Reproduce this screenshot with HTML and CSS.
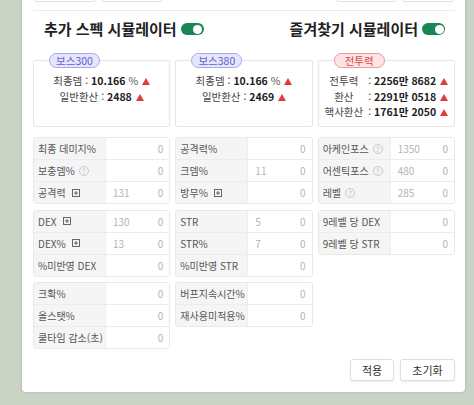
FILE: index.html
```html
<!DOCTYPE html>
<html lang="ko">
<head>
<meta charset="utf-8">
<title>추가 스펙 시뮬레이터</title>
<link rel="stylesheet" href="styles.css">
</head>
<body>
<div class="page">
  <div class="panel">
    <div class="topbar">
      <div class="tgroup tgroup-left"><span class="tbtn w62"></span><span class="tbtn w62"></span></div>
      <div class="tgroup"><span class="tbtn w61"></span><span class="tbtn w53"></span></div>
    </div>
    <div class="divider"></div>

    <div class="titles">
      <div class="title">추가 스펙 시뮬레이터<span class="toggle"><span class="knob"></span></span></div>
      <div class="title">즐겨찾기 시뮬레이터<span class="toggle"><span class="knob"></span></span></div>
    </div>

    <div class="cards">
      <div class="card">
        <div class="badge badge-blue">보스300</div>
        <div class="card-body">
          <div class="line">최종뎀 : <b>10.166</b> <span class="unit">%</span> <svg class="up" viewBox="0 0 8 7"><polygon points="4,0 8,7 0,7"/></svg></div>
          <div class="line">일반환산 : <b>2488</b> <svg class="up" viewBox="0 0 8 7"><polygon points="4,0 8,7 0,7"/></svg></div>
        </div>
      </div>
      <div class="card">
        <div class="badge badge-blue">보스380</div>
        <div class="card-body">
          <div class="line">최종뎀 : <b>10.166</b> <span class="unit">%</span> <svg class="up" viewBox="0 0 8 7"><polygon points="4,0 8,7 0,7"/></svg></div>
          <div class="line">일반환산 : <b>2469</b> <svg class="up" viewBox="0 0 8 7"><polygon points="4,0 8,7 0,7"/></svg></div>
        </div>
      </div>
      <div class="card">
        <div class="badge badge-red">전투력</div>
        <div class="card-grid">
          <span class="cg-l">전투력</span><span class="cg-v">: <b>2256만 8682</b> <svg class="up" viewBox="0 0 8 7"><polygon points="4,0 8,7 0,7"/></svg></span>
          <span class="cg-l">환산</span><span class="cg-v">: <b>2291만 0518</b> <svg class="up" viewBox="0 0 8 7"><polygon points="4,0 8,7 0,7"/></svg></span>
          <span class="cg-l">핵사환산</span><span class="cg-v">: <b>1761만 2050</b> <svg class="up" viewBox="0 0 8 7"><polygon points="4,0 8,7 0,7"/></svg></span>
        </div>
      </div>
    </div>

    <div class="fields">
      <div class="col">
        <div class="group">
          <div class="row"><div class="lbl">최종 데미지%</div><div class="val"><span class="base"></span><span>0</span></div></div>
          <div class="row"><div class="lbl">보충뎀%<span class="q">?</span></div><div class="val"><span class="base"></span><span>0</span></div></div>
          <div class="row"><div class="lbl">공격력<svg class="plus" viewBox="0 0 8 8"><rect x="0.5" y="0.5" width="7" height="7"/><path d="M2 4H6M4 2V6"/></svg></div><div class="val"><span class="base">131</span><span>0</span></div></div>
        </div>
        <div class="group">
          <div class="row"><div class="lbl">DEX<svg class="plus" viewBox="0 0 8 8"><rect x="0.5" y="0.5" width="7" height="7"/><path d="M2 4H6M4 2V6"/></svg></div><div class="val"><span class="base">130</span><span>0</span></div></div>
          <div class="row"><div class="lbl">DEX%<svg class="plus" viewBox="0 0 8 8"><rect x="0.5" y="0.5" width="7" height="7"/><path d="M2 4H6M4 2V6"/></svg></div><div class="val"><span class="base">13</span><span>0</span></div></div>
          <div class="row"><div class="lbl">%미반영 DEX</div><div class="val"><span class="base"></span><span>0</span></div></div>
        </div>
        <div class="group">
          <div class="row"><div class="lbl">크확%</div><div class="val"><span class="base"></span><span>0</span></div></div>
          <div class="row"><div class="lbl">올스탯%</div><div class="val"><span class="base"></span><span>0</span></div></div>
          <div class="row"><div class="lbl">쿨타임 감소(초)</div><div class="val"><span class="base"></span><span>0</span></div></div>
        </div>
      </div>

      <div class="col">
        <div class="group">
          <div class="row"><div class="lbl">공격력%</div><div class="val"><span class="base"></span><span>0</span></div></div>
          <div class="row"><div class="lbl">크뎀%</div><div class="val"><span class="base">11</span><span>0</span></div></div>
          <div class="row"><div class="lbl">방무%<svg class="plus" viewBox="0 0 8 8"><rect x="0.5" y="0.5" width="7" height="7"/><path d="M2 4H6M4 2V6"/></svg></div><div class="val"><span class="base"></span><span>0</span></div></div>
        </div>
        <div class="group">
          <div class="row"><div class="lbl">STR</div><div class="val"><span class="base">5</span><span>0</span></div></div>
          <div class="row"><div class="lbl">STR%</div><div class="val"><span class="base">7</span><span>0</span></div></div>
          <div class="row"><div class="lbl">%미반영 STR</div><div class="val"><span class="base"></span><span>0</span></div></div>
        </div>
        <div class="group">
          <div class="row"><div class="lbl">버프지속시간%</div><div class="val"><span class="base"></span><span>0</span></div></div>
          <div class="row"><div class="lbl">재사용미적용%</div><div class="val"><span class="base"></span><span>0</span></div></div>
        </div>
      </div>

      <div class="col">
        <div class="group">
          <div class="row"><div class="lbl">아케인포스<span class="q">?</span></div><div class="val"><span class="base">1350</span><span>0</span></div></div>
          <div class="row"><div class="lbl">어센틱포스<span class="q">?</span></div><div class="val"><span class="base">480</span><span>0</span></div></div>
          <div class="row"><div class="lbl">레벨<span class="q">?</span></div><div class="val"><span class="base">285</span><span>0</span></div></div>
        </div>
        <div class="group">
          <div class="row"><div class="lbl">9레벨 당 DEX</div><div class="val"><span class="base"></span><span>0</span></div></div>
          <div class="row"><div class="lbl">9레벨 당 STR</div><div class="val"><span class="base"></span><span>0</span></div></div>
        </div>
      </div>
    </div>

    <div class="actions">
      <button class="btn btn-apply">적용</button>
      <button class="btn btn-reset">초기화</button>
    </div>
  </div>
</div>
</body>
</html>
```
FILE: styles.css
```css
* { box-sizing: border-box; }
html, body {
  margin: 0;
  padding: 0;
  height: 405px;
  overflow: hidden;
  background: #cad4c6;
  font-family: "Noto Sans CJK KR", "Noto Sans", sans-serif;
}
.page {
  padding-left: 22px;
}
.panel {
  width: 443px;
  margin-top: -18px;
  background: #ffffff;
  padding: 0 10px 11px 11px;
  border-radius: 0 0 4px 4px;
  box-shadow: 0 0 3px rgba(0, 0, 0, 0.18);
}
.topbar {
  display: flex;
  justify-content: space-between;
}
.tgroup {
  display: flex;
  gap: 5px;
}
.tgroup-left { margin-left: 1px; }
.tbtn {
  display: block;
  height: 20px;
  border: 1px solid #e2e2e2;
  border-radius: 3px;
  background: #fff;
}
.w62 { width: 62px; }
.w61 { width: 61px; }
.w53 { width: 53px; }
.divider {
  margin-top: 8px;
  border-top: 1px solid #ebebeb;
}
.titles {
  margin-top: 9px;
  display: flex;
  justify-content: space-between;
  padding: 0 10px 0 11px;
}
.title {
  display: flex;
  align-items: center;
  gap: 4px;
  font-size: 15px;
  font-weight: 700;
  line-height: 18px;
  color: #222;
}
.toggle {
  position: relative;
  display: block;
  width: 23px;
  height: 12px;
  border-radius: 6px;
  background: #198754;
}
.knob {
  position: absolute;
  right: 1.5px;
  top: 1.5px;
  width: 9px;
  height: 9px;
  border-radius: 50%;
  background: #fff;
}
.cards {
  margin-top: 22px;
  display: grid;
  grid-template-columns: repeat(3, 1fr);
  gap: 5px;
}
.card {
  height: 67px;
  border: 1px solid #e6e6e6;
  border-radius: 2px;
}
.badge {
  width: 51px;
  height: 15px;
  margin: -8px 0 0 15px;
  border-radius: 8px;
  font-size: 10.5px;
  line-height: 13px;
  text-align: center;
}
.badge-blue {
  background: #e5e5fb;
  border: 1px solid #a7a7ec;
  color: #6060d0;
}
.badge-red {
  background: #fde5e5;
  border: 1px solid #e79a9a;
  color: #e04545;
}
.card-body {
  margin-top: 5px;
  text-align: center;
  font-size: 10.5px;
  line-height: 16px;
  color: #444;
}
.card-body b, .card-grid b {
  color: #222;
  font-weight: 700;
}
.unit { color: #555; }
.up {
  width: 8px;
  height: 7px;
  fill: #e53935;
  vertical-align: 0;
  margin-left: 1px;
}
.card-grid {
  margin-top: 5px;
  display: grid;
  grid-template-columns: auto auto;
  column-gap: 5px;
  justify-content: center;
  font-size: 10.5px;
  line-height: 15.5px;
  color: #444;
  white-space: nowrap;
}
.cg-l { text-align: center; }
.fields {
  margin-top: 10px;
  display: grid;
  grid-template-columns: repeat(3, 1fr);
  gap: 5px;
  align-items: start;
}
.col {
  display: flex;
  flex-direction: column;
  gap: 5.5px;
}
.group {
  border: 1px solid #e8e8e8;
  border-radius: 3px;
  overflow: hidden;
}
.row {
  display: flex;
  height: 21px;
}
.row + .row {
  border-top: 1px solid #ececec;
  height: 22px;
}
.lbl {
  width: 72px;
  flex: none;
  background: #f5f5f5;
  display: flex;
  align-items: center;
  gap: 4px;
  padding-left: 4px;
  font-size: 10px;
  color: #555;
  white-space: nowrap;
  border-right: 1px solid #eeeeee;
}
.val {
  flex: 1;
  display: flex;
  align-items: center;
  justify-content: space-between;
  padding: 0 6px 0 7px;
  font-size: 10px;
  color: #b3b3b3;
  background: #fff;
}
.q {
  display: inline-block;
  width: 10px;
  height: 10px;
  border: 1px solid #c9c9c9;
  border-radius: 50%;
  font-size: 7px;
  line-height: 8px;
  text-align: center;
  color: #bdbdbd;
}
.plus {
  width: 8px;
  height: 8px;
  fill: none;
  stroke: #666;
  stroke-width: 1;
  margin-left: 2px;
}
.actions {
  margin-top: 10px;
  display: flex;
  justify-content: flex-end;
  gap: 6px;
}
.btn {
  height: 22px;
  padding: 0;
  border: 1px solid #dedede;
  border-radius: 3px;
  background: #fff;
  box-shadow: 0 1px 2px rgba(0, 0, 0, 0.08);
  font-family: "Noto Sans CJK KR", "Noto Sans", sans-serif;
  font-size: 11px;
  color: #333;
}
.btn-apply { width: 44px; }
.btn-reset { width: 55px; }
```
